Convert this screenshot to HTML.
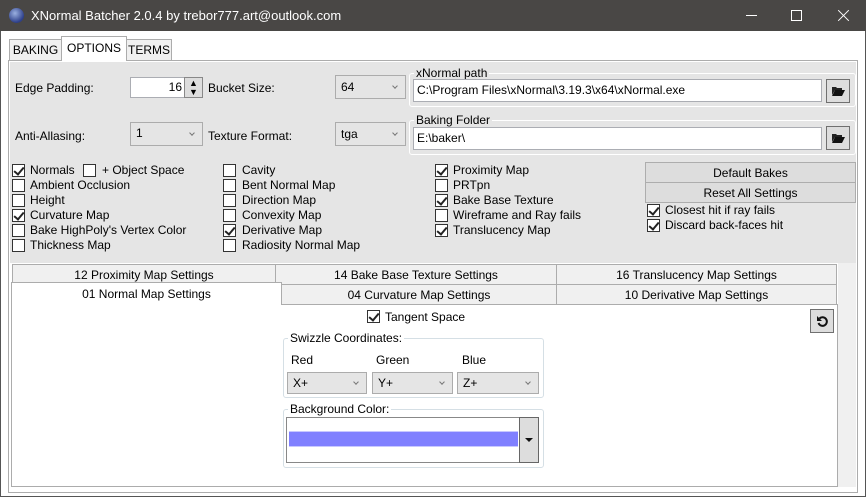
<!DOCTYPE html>
<html><head><meta charset="utf-8"><style>
*{box-sizing:border-box;margin:0;padding:0}
body{width:866px;height:497px;overflow:hidden;background:#fff;font-family:"Liberation Sans",sans-serif;font-size:12px;color:#000;position:relative}
.a{position:absolute}
.title{left:0;top:0;width:866px;height:31px;background:#494745;color:#fff;font-size:13px}
.tab{position:absolute;border:1px solid #acacac;background:#f0f0f0;text-align:center;line-height:20px;font-size:12px}
.cb{position:absolute;width:13px;height:13px;border:1px solid #333;background:#fff}
.cb.c::after{content:"";position:absolute;left:3px;top:0px;width:4px;height:8px;border:solid #222;border-width:0 2px 2px 0;transform:rotate(40deg)}
.lbl{position:absolute;white-space:nowrap;line-height:15px}
.combo{position:absolute;border:1px solid #acacac;background:#e5e5e5;padding-left:5px}
.combo::after{content:"";position:absolute;right:8px;top:50%;width:3px;height:3px;border:solid #777;border-width:0 1px 1px 0;transform:translateY(-3px) rotate(45deg)}
.tb{position:absolute;border:1px solid #abadb3;background:#fff;padding-left:3px}
.grp{position:absolute;border:1px solid #d5dfe5;border-radius:3px}
.grp span{position:absolute;left:4px;top:-8px;background:inherit;padding:0 2px;line-height:14px}
.btn{position:absolute;border:1px solid #707070;background:#dddddd;text-align:center}
</style></head><body>
<div class="a title">
 <div class="a" style="left:9px;top:8px;width:15px;height:15px;border-radius:50%;background:radial-gradient(circle at 40% 35%,#9ab0e0,#2d3f8a 70%)"></div>
 <div class="a" style="left:31px;top:8px">XNormal Batcher 2.0.4 by trebor777.art@outlook.com</div>
 <div class="a" style="left:746px;top:15px;width:11px;height:1px;background:#fff"></div>
 <div class="a" style="left:791px;top:10px;width:11px;height:11px;border:1px solid #fff"></div>
 <div class="a" style="left:836px;top:15px;width:15px;height:1px;background:#fff;transform:rotate(45deg)"></div>
 <div class="a" style="left:836px;top:15px;width:15px;height:1px;background:#fff;transform:rotate(-45deg)"></div>
</div>
<div class="a" style="left:0;top:31px;width:1px;height:466px;background:#555"></div>
<div class="a" style="left:865px;top:31px;width:1px;height:466px;background:#555"></div>
<div class="a" style="left:0;top:496px;width:866px;height:1px;background:#555"></div>

<div class="tab" style="left:9px;top:39px;width:53px;height:22px;line-height:20px">BAKING</div>
<div class="tab" style="left:126px;top:39px;width:46px;height:22px">TERMS</div>
<div class="a" style="left:8px;top:60px;width:850px;height:433px;border:1px solid #acacac;background:#fff"></div>
<div class="tab" style="left:61px;top:36px;width:66px;height:25px;background:#fff;border-bottom:none;line-height:23px">OPTIONS</div>
<div class="a" style="left:10px;top:62px;width:846px;height:201px;background:#e5e5e5"></div>

<div class="lbl" style="left:15px;top:81px">Edge Padding:</div>
<div class="tb" style="left:130px;top:77px;width:55px;height:21px;text-align:right;padding-right:2px;line-height:19px">16</div>
<div class="a" style="left:184px;top:77px;width:19px;height:21px;border:1px solid #888;background:#ddd"></div>
<div class="a" style="left:189px;top:80px;width:9px;height:6px;font-size:9px;line-height:6px;text-align:center">&#9650;</div>
<div class="a" style="left:189px;top:89px;width:9px;height:6px;font-size:9px;line-height:6px;text-align:center">&#9660;</div>
<div class="lbl" style="left:208px;top:81px">Bucket Size:</div>
<div class="combo" style="left:335px;top:75px;width:71px;height:24px;line-height:22px">64</div>
<div class="lbl" style="left:15px;top:129px">Anti-Allasing:</div>
<div class="combo" style="left:130px;top:122px;width:73px;height:24px;line-height:20px">1</div>
<div class="lbl" style="left:208px;top:129px">Texture Format:</div>
<div class="combo" style="left:335px;top:122px;width:71px;height:24px;line-height:22px">tga</div>

<div class="grp" style="left:409px;top:73px;width:447px;height:34px;background:#e5e5e5;border-color:#fff"><span>xNormal path</span></div>
<div class="tb" style="left:413px;top:79px;width:409px;height:23px;line-height:21px">C:\Program Files\xNormal\3.19.3\x64\xNormal.exe</div>
<div class="btn" style="left:826px;top:79px;width:24px;height:24px"><svg class="a" style="left:5px;top:6px" width="13" height="10" viewBox="0 0 13 10"><path d="M0 1h4l1 1h5v2H3L0 9z" fill="#222"/><path d="M3 4h10l-3 6H0z" fill="#111"/></svg></div>
<div class="grp" style="left:409px;top:120px;width:447px;height:35px;background:#e5e5e5;border-color:#fff"><span>Baking Folder</span></div>
<div class="tb" style="left:413px;top:127px;width:409px;height:23px;line-height:21px">E:\baker\</div>
<div class="btn" style="left:826px;top:126px;width:24px;height:24px"><svg class="a" style="left:5px;top:6px" width="13" height="10" viewBox="0 0 13 10"><path d="M0 1h4l1 1h5v2H3L0 9z" fill="#222"/><path d="M3 4h10l-3 6H0z" fill="#111"/></svg></div>

<div class="cb c" style="left:12px;top:164px"></div><div class="lbl" style="left:30px;top:163px">Normals</div>
<div class="cb" style="left:83px;top:164px"></div><div class="lbl" style="left:102px;top:163px">+ Object Space</div>
<div class="cb" style="left:12px;top:179px"></div><div class="lbl" style="left:30px;top:178px">Ambient Occlusion</div>
<div class="cb" style="left:12px;top:194px"></div><div class="lbl" style="left:30px;top:193px">Height</div>
<div class="cb c" style="left:12px;top:209px"></div><div class="lbl" style="left:30px;top:208px">Curvature Map</div>
<div class="cb" style="left:12px;top:224px"></div><div class="lbl" style="left:30px;top:223px">Bake HighPoly's Vertex Color</div>
<div class="cb" style="left:12px;top:239px"></div><div class="lbl" style="left:30px;top:238px">Thickness Map</div>

<div class="cb" style="left:223px;top:164px"></div><div class="lbl" style="left:242px;top:163px">Cavity</div>
<div class="cb" style="left:223px;top:179px"></div><div class="lbl" style="left:242px;top:178px">Bent Normal Map</div>
<div class="cb" style="left:223px;top:194px"></div><div class="lbl" style="left:242px;top:193px">Direction Map</div>
<div class="cb" style="left:223px;top:209px"></div><div class="lbl" style="left:242px;top:208px">Convexity Map</div>
<div class="cb c" style="left:223px;top:224px"></div><div class="lbl" style="left:242px;top:223px">Derivative Map</div>
<div class="cb" style="left:223px;top:239px"></div><div class="lbl" style="left:242px;top:238px">Radiosity Normal Map</div>

<div class="cb c" style="left:435px;top:164px"></div><div class="lbl" style="left:453px;top:163px">Proximity Map</div>
<div class="cb" style="left:435px;top:179px"></div><div class="lbl" style="left:453px;top:178px">PRTpn</div>
<div class="cb c" style="left:435px;top:194px"></div><div class="lbl" style="left:453px;top:193px">Bake Base Texture</div>
<div class="cb" style="left:435px;top:209px"></div><div class="lbl" style="left:453px;top:208px">Wireframe and Ray fails</div>
<div class="cb c" style="left:435px;top:224px"></div><div class="lbl" style="left:453px;top:223px">Translucency Map</div>

<div class="btn" style="left:645px;top:162px;width:211px;height:21px;line-height:21px;border-color:#adadad">Default Bakes</div>
<div class="btn" style="left:645px;top:182px;width:211px;height:21px;line-height:21px;border-color:#adadad">Reset All Settings</div>
<div class="cb c" style="left:647px;top:204px"></div><div class="lbl" style="left:665px;top:203px">Closest hit if ray fails</div>
<div class="cb c" style="left:647px;top:219px"></div><div class="lbl" style="left:665px;top:218px">Discard back-faces hit</div>

<div class="a" style="left:838px;top:263px;width:18px;height:224px;background:#f0f0f0"></div>
<div class="a" style="left:11px;top:304px;width:827px;height:183px;border:1px solid #acacac;background:#fff"></div>
<div class="tab" style="left:12px;top:264px;width:264px;height:21px;line-height:20px">12 Proximity Map Settings</div>
<div class="tab" style="left:275px;top:264px;width:282px;height:21px;line-height:20px">14 Bake Base Texture Settings</div>
<div class="tab" style="left:556px;top:264px;width:281px;height:21px;line-height:20px">16 Translucency Map Settings</div>
<div class="tab" style="left:281px;top:284px;width:276px;height:21px;line-height:21px">04 Curvature Map Settings</div>
<div class="tab" style="left:556px;top:284px;width:281px;height:21px;line-height:21px">10 Derivative Map Settings</div>
<div class="tab" style="left:11px;top:282px;width:271px;height:23px;background:#fff;border-bottom:none;line-height:23px">01 Normal Map Settings</div>

<div class="btn" style="left:810px;top:309px;width:24px;height:24px"><svg class="a" style="left:5px;top:5px" width="13" height="13" viewBox="0 0 13 13"><path d="M3.5 3.5A4.3 4.3 0 1 1 2.5 8" fill="none" stroke="#111" stroke-width="2"/><path d="M1 1v5h5z" fill="#111"/></svg></div>
<div class="cb c" style="left:367px;top:310px"></div><div class="lbl" style="left:385px;top:310px">Tangent Space</div>
<div class="grp" style="left:283px;top:338px;width:261px;height:60px;background:#fff"><span>Swizzle Coordinates:</span></div>
<div class="lbl" style="left:291px;top:353px">Red</div>
<div class="lbl" style="left:376px;top:353px">Green</div>
<div class="lbl" style="left:462px;top:353px">Blue</div>
<div class="combo" style="left:287px;top:372px;width:80px;height:22px;line-height:21px">X+</div>
<div class="combo" style="left:372px;top:372px;width:81px;height:22px;line-height:21px">Y+</div>
<div class="combo" style="left:457px;top:372px;width:82px;height:22px;line-height:21px">Z+</div>
<div class="grp" style="left:283px;top:409px;width:261px;height:59px;background:#fff"><span>Background Color:</span></div>
<div class="a" style="left:286px;top:417px;width:253px;height:46px;border:1px solid #888;background:#fff"></div>
<div class="a" style="left:289px;top:431px;width:229px;height:16px;background:#8080ff;border-top:1px solid #c8c8ff;border-bottom:1px solid #c8c8ff"></div>
<div class="a" style="left:519px;top:417px;width:20px;height:46px;border:1px solid #666;background:#ddd"></div>
<div class="a" style="left:525px;top:438px;width:0;height:0;border-left:4px solid transparent;border-right:4px solid transparent;border-top:4px solid #111"></div>
</body></html>
